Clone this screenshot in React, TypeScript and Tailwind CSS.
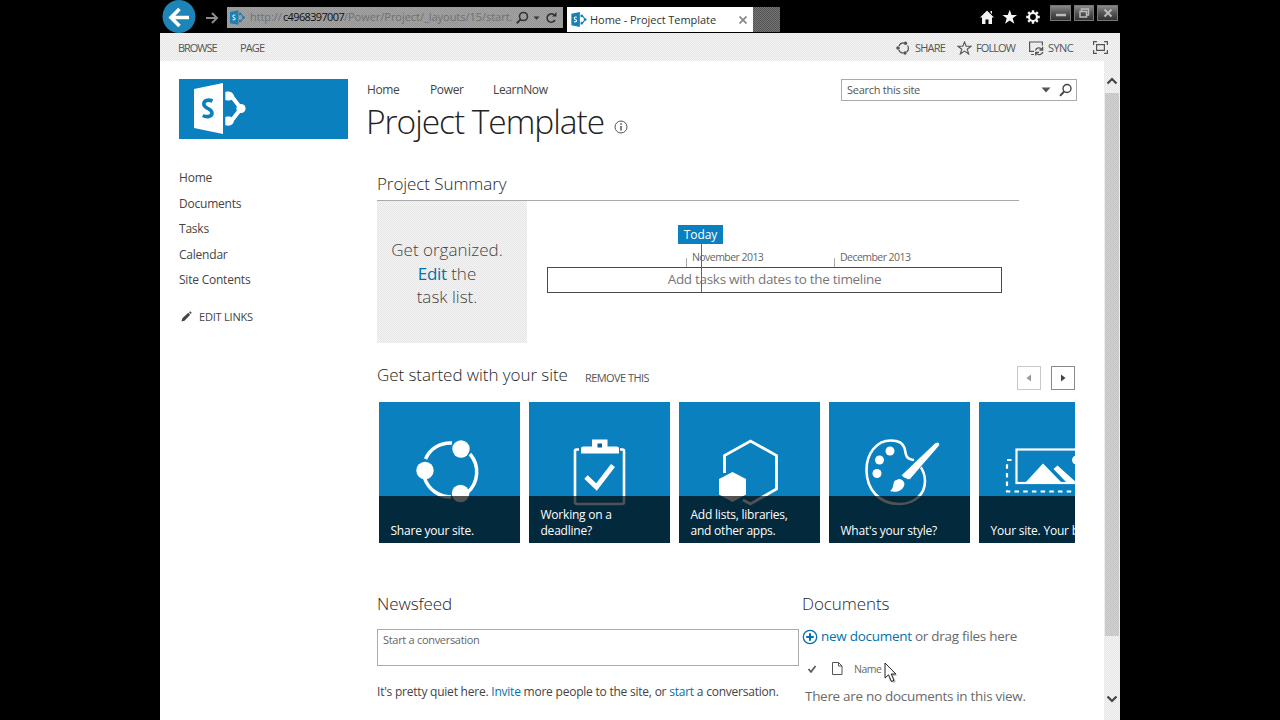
import type { ReactNode } from "react";

const dither =
  "bg-[repeating-conic-gradient(#f3f3f3_0_25%,#e7e7e7_0_50%)] bg-[length:2px_2px]";

function SharePointLogo({ className, sheet, letter, nodes }: { className: string; sheet: string; letter: string; nodes: string }) {
  return (
    <svg viewBox="0 0 52 51" className={className}>
      <path d="M0 6 L29 0 V51 L0 45 Z" fill={sheet} />
      <path d="M18.500 18 C14 16 9.800 17.500 9.800 21 C9.800 26 18 25 18 30 C18 34 12.500 34.500 8.800 32.500" fill="none" stroke={letter} strokeWidth="3.600" />
      <path d="M37 12.500 L47 25.500 L37 38.500" fill="none" stroke={nodes} strokeWidth="4" />
      <path d="M31.300 9 C36 7.500 40 10 39.800 13.500 C39.500 17 35.500 18.500 31.300 17 Z" fill={nodes} />
      <path d="M31.300 34 C36 32.500 40 34.500 39.800 38 C39.500 42 35.500 43.500 31.300 42.200 Z" fill={nodes} />
      <circle cx="47" cy="25.500" r="4.600" fill={nodes} />
    </svg>
  );
}

function BackButton() {
  return (
    <svg viewBox="0 0 34 33" className="h-[33px] w-[34px]">
      <circle cx="17" cy="16.500" r="16.500" fill="#1d84b8" />
      <path d="M27 17.500 H10 M17.500 9 L9 17.500 L17.500 26" fill="none" stroke="#fff" strokeWidth="3.600" />
    </svg>
  );
}

function ShareGlyph() {
  return (
    <svg viewBox="0 0 14 14" className="size-[14px]" fill="none" stroke="#555" strokeWidth="1.200">
      <path d="M3 5 A5 5 0 0 1 8.500 2 M11.500 4.500 A5 5 0 0 1 10.500 11 M7.500 12 A5 5 0 0 1 2.800 9" />
      <g fill="#555" stroke="none">
        <circle cx="9.500" cy="2.300" r="1.700" />
        <circle cx="2" cy="7" r="1.800" />
        <circle cx="9" cy="12" r="1.700" />
      </g>
    </svg>
  );
}

function SyncGlyph() {
  return (
    <svg viewBox="0 0 17 15" className="h-[15px] w-[17px]" fill="none" stroke="#555" strokeWidth="1.200">
      <path d="M14.400 4.500 V1 H1.600 V10.400 H6 M3 13.500 H6" />
      <path d="M7.500 9.500 C8 6.500 12 5.800 14 8.500 M14.600 5.800 V9 H11.400 M14.800 11 C14 14 10 14.600 8.200 12 M7.700 14.500 V11.400 H11" strokeWidth="1.300" />
    </svg>
  );
}

function Command({ icon, children, className }: { icon: ReactNode; children: ReactNode; className: string }) {
  return (
    <div className={`flex items-center text-[11px] text-[#555] ${className}`}>
      {icon}
      {children}
    </div>
  );
}

function WindowButton({ children, className }: { children: ReactNode; className: string }) {
  return (
    <div className={`flex h-4 items-center justify-center border border-[#777] bg-linear-to-b from-[#8a8a8a] via-[#555] to-[#333] ${className}`}>
      <svg viewBox="0 0 12 10" className="h-[10px] w-3" fill="none" stroke="#bbb" strokeWidth="1.500">
        {children}
      </svg>
    </div>
  );
}

function TitleBar() {
  return (
    <div className="flex h-[33px] shrink-0 bg-black">
      <div className="ml-[2px] w-[34px]"><BackButton /></div>
      <svg viewBox="0 0 14 12" className="mt-[12px] ml-[9px] h-[12px] w-[14px]" fill="none" stroke="#8c8c8c" strokeWidth="2">
        <path d="M1 6 H12 M7 1 L12 6 L7 11" />
      </svg>
      <div className="mt-[7px] ml-[8px] flex h-[21px] w-[336px] items-center bg-[repeating-conic-gradient(#a4a4a4_0_25%,#949494_0_50%)] bg-[length:2px_2px] pl-[3px] text-[11px] whitespace-nowrap text-[#707070]">
        <SharePointLogo className="h-[15px] w-[15px]" sheet="#1a7fb4" letter="#dceaf2" nodes="#1a7fb4" />
        <div className="ml-[5px] flex w-[264px]">
          <span className="w-[33px] tracking-[-0.1px]">http://</span>
          <span className="w-[61px] tracking-[-0.65px] text-[#111]">c4968397007</span>
          <span className="tracking-[-0.03px]">/Power/Project/_layouts/15/start.</span>
        </div>
        <svg viewBox="0 0 42 14" className="ml-[2px] h-[14px] w-[42px]" fill="none" stroke="#333" strokeWidth="1.600">
          <circle cx="7.500" cy="5.500" r="4" />
          <path d="M4.600 8.400 L0.800 12.300" strokeWidth="2" />
          <path d="M17.500 5.500 H23.500 L20.500 8.800 Z" fill="#333" stroke="none" />
          <path d="M39 9 A4.200 4.200 0 1 1 38 3.800" />
          <path d="M36 5.500 H40.500 V1 Z" fill="#333" stroke="none" />
        </svg>
      </div>
      <div className="mt-[7px] ml-[4px] flex h-[25px] w-[186px] items-center bg-white pl-[4px] text-[11px] text-[#333]">
        <SharePointLogo className="h-[15px] w-[16px]" sheet="#1a7fb4" letter="#fff" nodes="#1a7fb4" />
        <span className="mt-[2px] ml-[3px] w-[149px] tracking-[-0.05px]">Home - Project Template</span>
        <svg viewBox="0 0 8 8" className="size-[8px]" stroke="#888" strokeWidth="1.700"><path d="M0.500 0.500 L7.500 7.500 M7.500 0.500 L0.500 7.500" /></svg>
      </div>
      <div className="mt-[7px] h-[25px] w-[27px] bg-[repeating-conic-gradient(#777_0_25%,#525252_0_50%)] bg-[length:2px_2px]" />
      <svg viewBox="0 0 62 16" className="mt-[9px] ml-[200px] h-4 w-[62px]" fill="#f4f4f4">
        <path d="M7 1.500 L14 8.500 H12 V15 H8.500 V10.500 H5.500 V15 H2 V8.500 H0 Z M10.500 2 H12 V5 L10.500 3.500 Z" />
        <path d="M29.700 0.800 L31.600 6 H37 L32.700 9.300 L34.300 14.800 L29.700 11.500 L25.100 14.800 L26.700 9.300 L22.400 6 H27.800 Z" />
        <circle cx="53" cy="8" r="4" fill="none" stroke="#f4f4f4" strokeWidth="2.200" />
        <g stroke="#f4f4f4" strokeWidth="2.400">
          <path d="M53 1.200 V4 M53 12 V14.800 M46.200 8 H49 M57 8 H59.800 M48.200 3.200 L50 5 M56 11 L57.800 12.800 M57.800 3.200 L56 5 M50 11 L48.200 12.800" />
        </g>
      </svg>
      <div className="mt-[5px] ml-[8px] flex gap-[3px]">
        <WindowButton className="w-[21px]"><path d="M1 7 H11" strokeWidth="2.500" /></WindowButton>
        <WindowButton className="w-[20px]"><path d="M3.500 3 V1 H10.500 V7 H9 M2 3.500 H8.500 V9 H2 Z" /></WindowButton>
        <WindowButton className="w-[21px]"><path d="M2.500 1.500 L9.500 8.500 M9.500 1.500 L2.500 8.500" strokeWidth="2" /></WindowButton>
      </div>
    </div>
  );
}

function Ribbon() {
  return (
    <div className={`flex h-[28px] shrink-0 items-center pt-[2px] text-[11px] text-[#555] ${dither}`}>
      <span className="ml-[18px] w-[62px] tracking-[-1.05px]">BROWSE</span>
      <span className="w-[653px] tracking-[-0.85px]">PAGE</span>
      <Command className="w-[64px] gap-[5px] tracking-[-0.8px] pl-[3px]" icon={<ShareGlyph />}>SHARE</Command>
      <Command
        className="w-[71px] gap-[4px] tracking-[-0.9px]"
        icon={
          <svg viewBox="0 0 15 14" className="h-[14px] w-[15px]" fill="none" stroke="#555" strokeWidth="1.100">
            <path d="M7.500 1 L9.200 5.300 H14 L10.200 8.200 L11.700 13 L7.500 10.100 L3.300 13 L4.800 8.200 L1 5.300 H5.800 Z" />
          </svg>
        }
      >
        FOLLOW
      </Command>
      <Command className="w-[65px] gap-[3px] tracking-[-0.6px]" icon={<SyncGlyph />}>SYNC</Command>
      <svg viewBox="0 0 15 13" className="-mt-[2px] h-[13px] w-[15px]" fill="none" stroke="#555" strokeWidth="1.200">
        <path d="M0.600 4 V0.600 H4 M11 0.600 H14.400 V4 M14.400 9 V12.400 H11 M4 12.400 H0.600 V9 M3.600 3.600 H11.400 V9.400 H3.600 Z" />
      </svg>
    </div>
  );
}

function Sidebar() {
  return (
    <aside className="w-[207px] shrink-0 pt-[18px] pl-[19px] text-xs text-[#444]">
      <div className="h-[60px] w-[168.500px] bg-[#0a80bf] pt-[4px] pl-[14.500px]">
        <SharePointLogo className="h-[51px] w-[52px]" sheet="#fff" letter="#0a80bf" nodes="#fff" />
      </div>
      <ul className="mt-[26px] tracking-[-0.22px]">
        {["Home", "Documents", "Tasks", "Calendar", "Site Contents"].map((item) => (
          <li key={item} className="h-[25.6px] leading-[25.6px]">{item}</li>
        ))}
      </ul>
      <div className="mt-[11px] flex h-[26px] items-center text-[11px] tracking-[-0.2px]">
        <svg viewBox="0 0 12 12" className="mr-[7px] ml-[2px] size-[11px]" fill="#444">
          <path d="M0.500 11.500 L1.500 8 L8 2 L10 4 L3.800 10.500 Z M8.800 1.300 L10 0.300 L11.700 2 L10.700 3.200 Z" />
        </svg>
        EDIT LINKS
      </div>
    </aside>
  );
}

function Timeline() {
  return (
    <div className="relative h-[143px] w-[492px] font-normal">
      <div className="absolute top-[67px] left-[20px] flex h-[26px] w-[455px] items-center justify-center border border-[#4a4a4a] pb-[2px] text-[13.500px] tracking-[-0.3px] text-[#777]">
        Add tasks with dates to the timeline
      </div>
      <div className="absolute top-[58px] left-[159px] h-[9px] w-px bg-[#aaa]" />
      <div className="absolute top-[58px] left-[307px] h-[9px] w-px bg-[#aaa]" />
      <span className="absolute top-[49px] left-[165px] text-[10.500px] leading-4 tracking-[-0.55px] text-[#666]">November 2013</span>
      <span className="absolute top-[49px] left-[313px] text-[10.500px] leading-4 tracking-[-0.55px] text-[#666]">December 2013</span>
      <div className="absolute top-[43px] left-[174px] h-[49px] w-px bg-[#0a80bf]" />
      <div className="absolute top-[25px] left-[151px] flex h-[19px] w-[45px] items-center justify-center bg-[#0a80bf] text-xs tracking-[-0.1px] text-white">Today</div>
    </div>
  );
}

function Tile({ lines, children }: { lines: string[]; children: ReactNode }) {
  return (
    <div className="relative h-[141px] w-[141px] shrink-0 bg-[#0a80bf]">
      <svg viewBox="0 0 141 141" className="h-[141px] w-[141px]">{children}</svg>
      <div className="absolute inset-x-0 bottom-0 flex h-[47px] flex-col justify-end bg-black/68 pb-[4px] pl-[11.500px] text-xs leading-4 tracking-[-0.22px] whitespace-nowrap text-white">
        {lines.map((line) => <div key={line}>{line}</div>)}
      </div>
    </div>
  );
}

function Tiles() {
  return (
    <div className="ml-[2px] flex w-[696px] gap-[9px] overflow-hidden">
      <Tile lines={["Share your site."]}>
        <g fill="none" stroke="#fff" strokeWidth="3.500">
          <path d="M46.500 57 A27 27 0 0 1 73 41" />
          <path d="M91 52 A27.500 27.500 0 0 1 88 91" />
          <path d="M45.500 76 A28 28 0 0 0 72 95" />
        </g>
        <g fill="#fff">
          <circle cx="82" cy="47" r="8.700" />
          <circle cx="46" cy="68.500" r="8.700" />
          <circle cx="81.500" cy="91.500" r="8.700" />
        </g>
      </Tile>
      <Tile lines={["Working on a", "deadline?"]}>
        <path d="M50 47.500 H47.500 Q46 47.500 46 49 V100 Q46 102 48 102 H93 Q95 102 95 100 V49 Q95 47.500 93.500 47.500 H91" fill="none" stroke="#fff" strokeWidth="2.600" />
        <path d="M52 51.500 V45.500 L54 44.500 H63 V37.500 H78.500 V44.500 H88 L90 45.500 V51.500 Z" fill="#fff" />
        <rect x="68.500" y="41.500" width="4.500" height="4" fill="#0a5f94" />
        <path d="M57 75 L67.500 85 L84 63.500" fill="none" stroke="#fff" strokeWidth="5" />
      </Tile>
      <Tile lines={["Add lists, libraries,", "and other apps."]}>
        <path d="M45.500 71 V53.500 L71.500 39 L97.500 53.500 V87 L71.500 102 L64 98" fill="none" stroke="#fff" strokeWidth="2.800" />
        <path d="M53.500 70 L67 77 V92.500 L53.500 100 L40 92.500 V77 Z" fill="#fff" />
      </Tile>
      <Tile lines={["What's your style?"]}>
        <path d="M85 58 C75 57 77 50 75.500 46 C74 41 69 38.500 62 38.500 C47 38.500 37.500 52 37.500 68 C37.500 88 51 102 70 102 C86 102 96 92 96 79 C96 72 93.500 67 90 63" fill="none" stroke="#fff" strokeWidth="2.600" />
        <g fill="#fff">
          <circle cx="61" cy="49" r="4.500" />
          <circle cx="50.500" cy="58" r="4.500" />
          <circle cx="48" cy="71.500" r="4.500" />
          <path d="M109 40 C111 41 111 43 110 44 L81 77.500 C78 78 73 75 72.500 73 L106 41 Z" stroke="#0a80bf" strokeWidth="0.800" />
          <path d="M70 77 C74 77 76.500 81 75 84 C73 89 67 91 61 89 C65 87 63.500 81 66 78.500 Z" />
        </g>
      </Tile>
      <Tile lines={["Your site. Your brand."]}>
        <path d="M32.500 58 H28 V89.500 H110" fill="none" stroke="#fff" strokeWidth="2.200" strokeDasharray="4.500 4.200" />
        <rect x="37.500" y="47.500" width="66" height="33.500" fill="#0a80bf" stroke="#fff" strokeWidth="2.200" />
        <path d="M46 81 L64 61.500 L83 81 Z M74.500 67 L78.500 63.500 L98 81 H88 Z" fill="#fff" />
        <circle cx="97.500" cy="58" r="4.500" fill="#fff" />
      </Tile>
    </div>
  );
}

function PageBody() {
  return (
    <main className="w-[737px] shrink-0 pt-[18px]">
      <div className="flex h-[82px]">
        <div className="w-[474px]">
          <nav className="mt-px flex h-5 items-center text-xs tracking-[-0.36px] text-[#444]">
            <span className="w-[63px]">Home</span>
            <span className="w-[63px]">Power</span>
            <span>LearnNow</span>
          </nav>
          <div className="-ml-px flex h-[44px] items-center">
            <h1 className="text-[33.5px] leading-none font-light tracking-[-1.03px] whitespace-nowrap text-[#222]">Project Template</h1>
            <svg viewBox="0 0 14 14" className="mt-[9px] ml-[10px] size-[14px]" fill="none" stroke="#555">
              <circle cx="7" cy="7" r="6" />
              <path d="M7 6 V10.500 M7 3.300 V4.800" strokeWidth="1.500" />
            </svg>
          </div>
        </div>
        <div className="flex h-[22px] w-[236px] items-center border border-[#aaa] pl-[5px] text-[11px] tracking-[-0.27px] text-[#555]">
          <span className="mt-px w-[194px]">Search this site</span>
          <svg viewBox="0 0 32 14" className="h-[14px] w-8" fill="none" stroke="#444" strokeWidth="1.400">
            <path d="M0.500 4.500 H9.500 L5 9.500 Z" fill="#555" stroke="none" />
            <circle cx="26" cy="5.500" r="4" />
            <path d="M23.200 8.500 L19 12.800" strokeWidth="1.900" />
          </svg>
        </div>
      </div>

      <div className="ml-[10px] font-light text-[#262626]">
        <section className="w-[642px]">
          <h2 className="flex h-[40px] items-center border-b border-[#aaa] pb-[2px] pt-[8px] text-[17px] tracking-[-0.08px]">Project Summary</h2>
          <div className="flex">
            <div className={`h-[142px] w-[150px] pt-[37px] pr-[10px] text-center text-[17px] leading-[23.500px] text-[#444] ${dither}`}>
              Get organized.
              <br />
              <span className="font-normal tracking-[-0.3px] text-[#0072ad]">Edit</span> the
              <br />
              task list.
            </div>
            <div className="-mt-px h-[143px]"><Timeline /></div>
          </div>
        </section>

        <section className="mt-[22px] font-normal">
          <div className="flex h-[25px] w-[698px] items-start">
            <h2 className="w-[208px] text-[17px] leading-[20px] font-light tracking-[-0.06px] whitespace-nowrap">Get started with your site</h2>
            <span className="text-[11px] leading-[26px] tracking-[-0.56px] text-[#555]">REMOVE THIS</span>
            <div className="mt-px ml-auto flex gap-[10px]">
              <div className="flex size-6 items-center justify-center border border-[#c8c8c8]">
                <svg viewBox="0 0 6 8" className="h-2 w-[6px]" fill="#999"><path d="M5 0.500 V7.500 L0.500 4 Z" /></svg>
              </div>
              <div className="flex size-6 items-center justify-center border border-[#8a8a8a]">
                <svg viewBox="0 0 6 8" className="h-2 w-[6px]" fill="#444"><path d="M1 0.500 V7.500 L5.500 4 Z" /></svg>
              </div>
            </div>
          </div>
          <div className="mt-[12px]"><Tiles /></div>
        </section>

        <div className="mt-[49px] flex">
          <section className="w-[425px]">
            <h2 className="h-[37px] text-[17px] leading-[24px] tracking-[-0.08px]">Newsfeed</h2>
            <div className="h-[37px] w-[421.500px] border border-[#ababab] pl-[5px] text-[11px] leading-[20px] font-normal tracking-[-0.3px] text-[#666]">Start a conversation</div>
            <p className="mt-[15px] text-xs leading-[22px] font-normal tracking-[-0.225px] whitespace-nowrap text-[#444]">
              It's pretty quiet here. <span className="text-[#0072ad]">Invite</span> more people to the site, or <span className="text-[#0072ad]">start</span> a conversation.
            </p>
          </section>
          <section className="text-[13.500px] font-normal tracking-[-0.28px] whitespace-nowrap text-[#6a6a6a]">
            <h2 className="-mt-px text-[17px] leading-[25px] font-light tracking-[-0.08px] text-[#262626]">Documents</h2>
            <div className="mt-[8px] flex h-6 items-center">
              <svg viewBox="0 0 16 16" className="mt-[2px] mr-[3.500px] -ml-[0.500px] size-4" fill="none" stroke="#0072ad" strokeWidth="1.300">
                <circle cx="8" cy="8" r="6.700" />
                <path d="M8 4.200 V11.800 M4.200 8 H11.800" strokeWidth="2" />
              </svg>
              <span><span className="text-[#0072ad]">new document</span> or drag files here</span>
            </div>
            <div className="relative mt-[10px] flex h-6 items-center text-[10.500px] tracking-[-0.5px]">
              <svg viewBox="0 0 40 14" className="-mt-[2px] ml-[5px] h-[14px] w-10" fill="none" stroke="#555">
                <path d="M1.500 7 L4 10 L8.500 4" strokeWidth="1.700" />
                <path d="M25.500 0.500 H31.500 L35 4 V12.500 H25.500 Z M31.500 0.500 V4 H35" />
              </svg>
              <span className="ml-[7px]">Name</span>
              <svg viewBox="0 0 14 22" className="absolute top-[4px] left-[82px] h-[22px] w-[14px]">
                <path d="M2.500 2.500 L5.500 19 L9.500 21 L12 20 L9 14 L13.500 13.500 Z" fill="#000" opacity="0.250" />
                <path d="M1 1 V16 L4.500 12.800 L7.500 19.500 L10 18.300 L7.200 12 H11.800 Z" fill="#fff" stroke="#222" />
              </svg>
            </div>
            <p className="mt-[2px] ml-[3px] leading-6 tracking-[-0.1px]">
              <span className="tracking-[-0.3px]">There are no documents in this view.</span>
            </p>
          </section>
        </div>
      </div>
    </main>
  );
}

function Scrollbar() {
  return (
    <div className={`flex w-4 shrink-0 flex-col items-center ${dither}`}>
      <svg viewBox="0 0 12 8" className="mt-[16px] h-2 w-3" fill="none" stroke="#444" strokeWidth="2.200"><path d="M1.500 6.500 L6 2 L10.500 6.500" /></svg>
      <div className="mt-[8px] h-[543px] w-[14px] bg-[repeating-conic-gradient(#d4d4d4_0_25%,#c2c2c2_0_50%)] bg-[length:2px_2px]" />
      <svg viewBox="0 0 12 8" className="mt-[59px] h-2 w-3" fill="none" stroke="#444" strokeWidth="2.200"><path d="M1.500 1.500 L6 6 L10.500 1.500" /></svg>
    </div>
  );
}

export default function App() {
  return (
    <div className="flex h-[720px] w-[1280px] justify-center overflow-hidden bg-black font-['Open_Sans',sans-serif]">
      <div className="flex w-[960px] flex-col overflow-hidden bg-white">
        <TitleBar />
        <Ribbon />
        <div className="flex min-h-0 flex-1 overflow-hidden">
          <Sidebar />
          <PageBody />
          <Scrollbar />
        </div>
      </div>
    </div>
  );
}
